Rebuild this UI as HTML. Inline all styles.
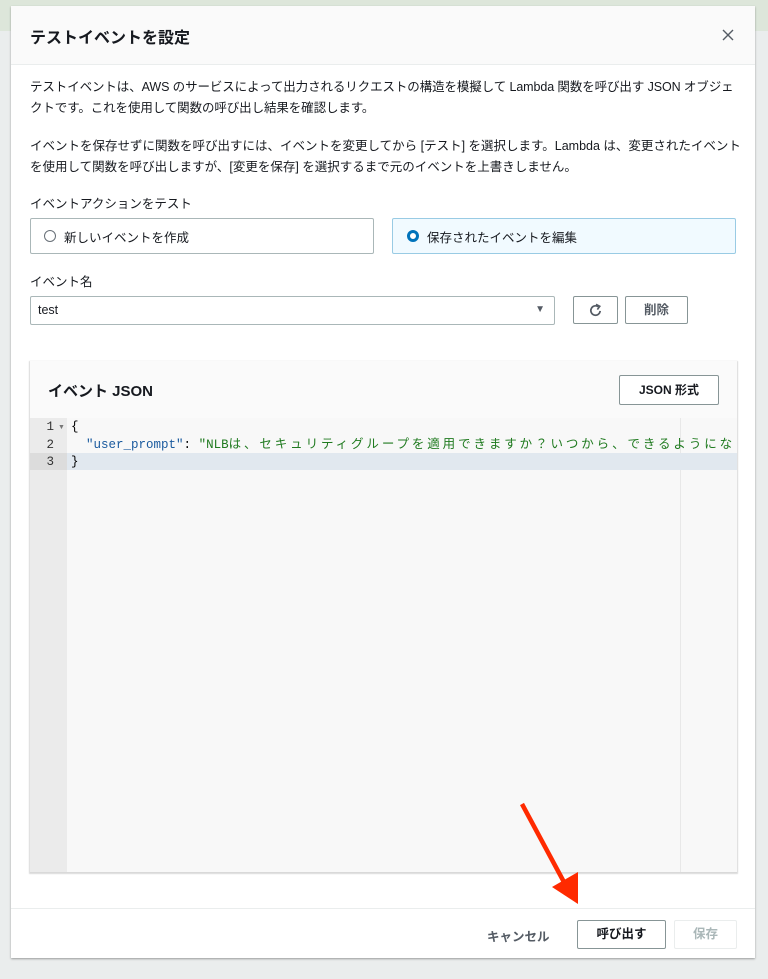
<!DOCTYPE html>
<html><head><meta charset="utf-8"><style>
*{box-sizing:border-box;margin:0;padding:0}
body{width:768px;height:979px;overflow:hidden;background:#eaeded;font-family:"Liberation Sans","Noto Sans CJK JP",sans-serif;color:#16191f;position:relative}
.band{position:absolute;left:0;top:0;width:768px;height:31px;background:#dde6da}
.abs{position:absolute}
.modal{position:absolute;left:11px;top:6px;width:744px;height:952px;background:#fff;box-shadow:0 1px 2px rgba(0,0,0,.35)}
.hdr{position:absolute;left:0;top:0;width:744px;height:59px;background:#fafafa;border-bottom:1px solid #eaeded}
.t{font-size:16px;font-weight:bold;position:absolute;left:19px;top:18px}
p{font-size:12.5px;line-height:21px;color:#16191f}
.box{position:absolute;border:1px solid #aab7b8;border-radius:2px;background:#fff}
.btn{position:absolute;border:1px solid #879596;border-radius:2px;background:#fff;font-size:12.5px;font-weight:bold;color:#545b64;text-align:center}
.code{font-family:"Liberation Mono","Noto Sans CJK JP",monospace;font-size:12.5px}
</style></head><body>
<div class="band"></div>
<div class="modal">
 <div class="hdr"><div class="t">テストイベントを設定</div>
  <svg class="abs" style="left:711px;top:23px" width="12" height="12" viewBox="0 0 12 12"><path d="M1 1L11 11M11 1L1 11" stroke="#545b64" stroke-width="1.4"/></svg></div>
 <p class="abs" style="left:19px;top:71px;width:706px;letter-spacing:-0.1px">テストイベントは、AWS のサービスによって出力されるリクエストの構造を模擬して Lambda 関数を呼び出す JSON オブジェクトです。これを使用して関数の呼び出し結果を確認します。</p>
 <p class="abs" style="left:19px;top:130px;width:714px">イベントを保存せずに関数を呼び出すには、イベントを変更してから [テスト] を選択します。Lambda は、変更されたイベントを使用して関数を呼び出しますが、[変更を保存] を選択するまで元のイベントを上書きしません。</p>
 <p class="abs" style="left:19px;top:188px">イベントアクションをテスト</p>
 <div class="box" style="left:19px;top:212px;width:344px;height:36px"><span class="abs" style="left:13px;top:11px;width:12px;height:12px;border:1px solid #687078;border-radius:50%"></span><span class="abs" style="left:33px;top:8px;font-size:12.5px">新しいイベントを作成</span></div>
 <div class="box" style="left:381px;top:212px;width:344px;height:36px;background:#f1faff;border-color:#99cbe4"><span class="abs" style="left:14px;top:11px;width:12px;height:12px;border:3.5px solid #0073bb;border-radius:50%;background:#fff"></span><span class="abs" style="left:34px;top:8px;font-size:12.5px">保存されたイベントを編集</span></div>
 <p class="abs" style="left:19px;top:266px">イベント名</p>
 <div class="box" style="left:19px;top:290px;width:525px;height:29px"><span class="abs" style="left:7px;top:6px;font-size:12.5px">test</span><span class="abs" style="right:9px;top:7px;font-size:10px;color:#545b64">▼</span></div>
 <div class="btn" style="left:562px;top:290px;width:45px;height:28px"><svg style="margin-top:6px" width="15" height="15" viewBox="0 0 16 16"><path d="M13 8.5A5 5 0 1 1 11 4" fill="none" stroke="#545b64" stroke-width="1.8"/><path d="M8.5 1.5L12.5 3.5L10 7" fill="none" stroke="#545b64" stroke-width="1.8"/></svg></div>
 <div class="btn" style="left:614px;top:290px;width:63px;height:28px;line-height:26px">削除</div>
 <div class="abs" style="left:19px;top:355px;width:707px;height:511px;background:#fafafa;box-shadow:0 1px 1px 1px rgba(0,0,0,.15)">
  <div class="abs" style="left:18px;top:19px;font-size:15px;font-weight:bold">イベント JSON</div>
  <div class="btn" style="left:589px;top:14px;width:100px;height:30px;line-height:28px;font-size:12px;color:#16191f">JSON 形式</div>
  <div class="abs" style="left:0;top:57px;width:707px;height:454px;background:#f8f8f8;overflow:hidden">
   <div class="abs" style="left:0;top:0;width:37px;height:454px;background:#ebebeb"></div>
   <div class="abs" style="left:650px;top:0;width:1px;height:454px;background:#e8e8e8"></div>
   <div class="abs" style="left:37px;top:35px;width:670px;height:17px;background:#e1e8ef"></div>
   <div class="abs" style="left:0;top:35px;width:37px;height:17px;background:#dcdcdc"></div>
   <div class="abs code" style="left:0;top:1px;width:37px;text-align:right;line-height:17.5px;color:#333;padding-right:13px">1<br>2<br>3</div>
   <div class="abs" style="left:28px;top:6px;font-size:7px;color:#777">▼</div>
   <div class="abs code" style="left:41px;top:1px;line-height:17.5px;color:#000;white-space:pre">{
  <span style="color:#1a5a9e">"user_prompt"</span>: <span style="color:#1f7a1f">"NLB<span style="letter-spacing:2.9px">は、セキュリティグループを適用できますか？いつから、できるようにな</span></span>
}</div>
  </div>
 </div>
 <div class="abs" style="left:0;top:902px;width:744px;height:1px;background:#eaeded"></div>
 <div class="abs" style="left:476px;top:920px;font-size:12.5px;font-weight:bold;color:#545b64">キャンセル</div>
 <div class="btn" style="left:566px;top:914px;width:89px;height:29px;line-height:27px;color:#16191f">呼び出す</div>
 <div class="btn" style="left:663px;top:914px;width:63px;height:29px;line-height:27px;color:#aab7b8;border-color:#eaeded">保存</div>
</div>
<svg class="abs" style="left:0;top:0" width="768" height="979"><path d="M522 804L565 884" stroke="#ff2a00" stroke-width="4.5"/><path d="M552 887L578 872L578 904Z" fill="#ff2a00"/></svg>
</body></html>
